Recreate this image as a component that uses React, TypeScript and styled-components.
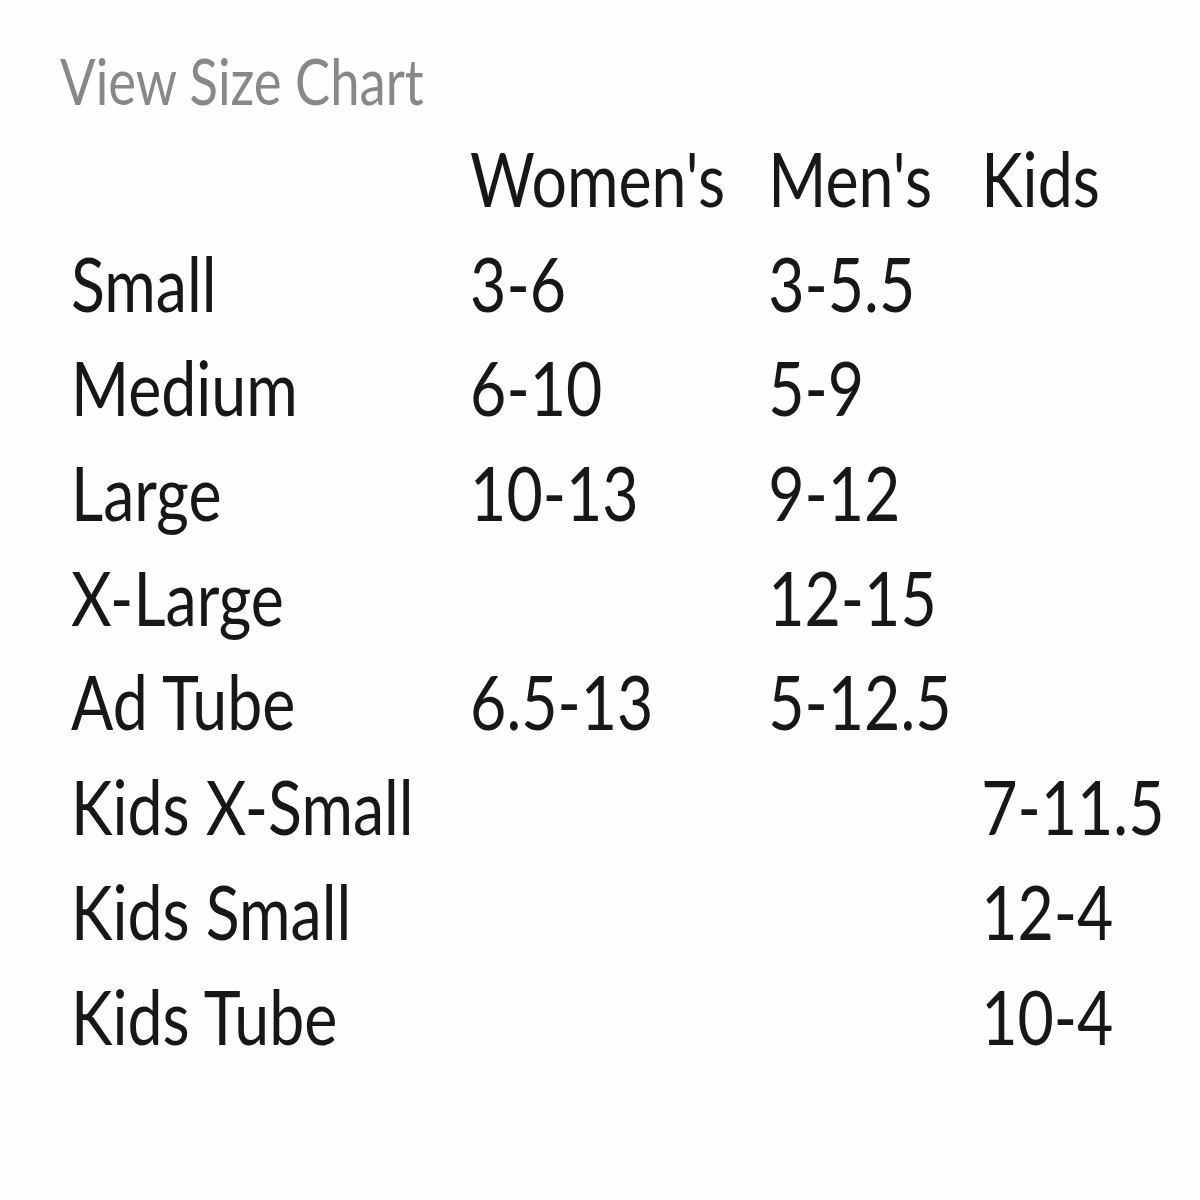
import styled, { createGlobalStyle } from "styled-components";

const GlobalStyle = createGlobalStyle`
    html, body {
        margin: 0;
        padding: 0;
        background: #fefefe;
    }
    body {
        font-family: Lato, "Open Sans", sans-serif;
    }
`;

// the chart text is horizontally narrowed, so the whole page is squeezed
const Page = styled.div`
    width: 1200px;
    height: 1200px;
    box-sizing: border-box;
    padding: 41px 0 0 72px;
    transform: scaleX(0.835);
    transform-origin: 0 0;
`;

const Title = styled.div`
    font-size: 63px;
    line-height: 80px;
    color: #888888;
    white-space: nowrap;
    margin-bottom: 5px;
`;

const Table = styled.div`
    display: grid;
    grid-template-columns: 478px 357px 255px auto;
    padding-left: 13px;
`;

const Cell = styled.div`
    font-size: 75px;
    line-height: 104.7px;
    height: 104.7px;
    color: #171619;
    white-space: nowrap;
`;

const rows: string[][] = [
    ["", "Women's", "Men's", "Kids"],
    ["Small", "3-6", "3-5.5", ""],
    ["Medium", "6-10", "5-9", ""],
    ["Large", "10-13", "9-12", ""],
    ["X-Large", "", "12-15", ""],
    ["Ad Tube", "6.5-13", "5-12.5", ""],
    ["Kids X-Small", "", "", "7-11.5"],
    ["Kids Small", "", "", "12-4"],
    ["Kids Tube", "", "", "10-4"],
];

export default function App() {
    return (
        <>
            <GlobalStyle />
            <Page>
                <Title>View Size Chart</Title>
                <Table>
                    {rows.map((row, i) =>
                        row.map((text, j) => <Cell key={i + "-" + j}>{text}</Cell>)
                    )}
                </Table>
            </Page>
        </>
    );
}
